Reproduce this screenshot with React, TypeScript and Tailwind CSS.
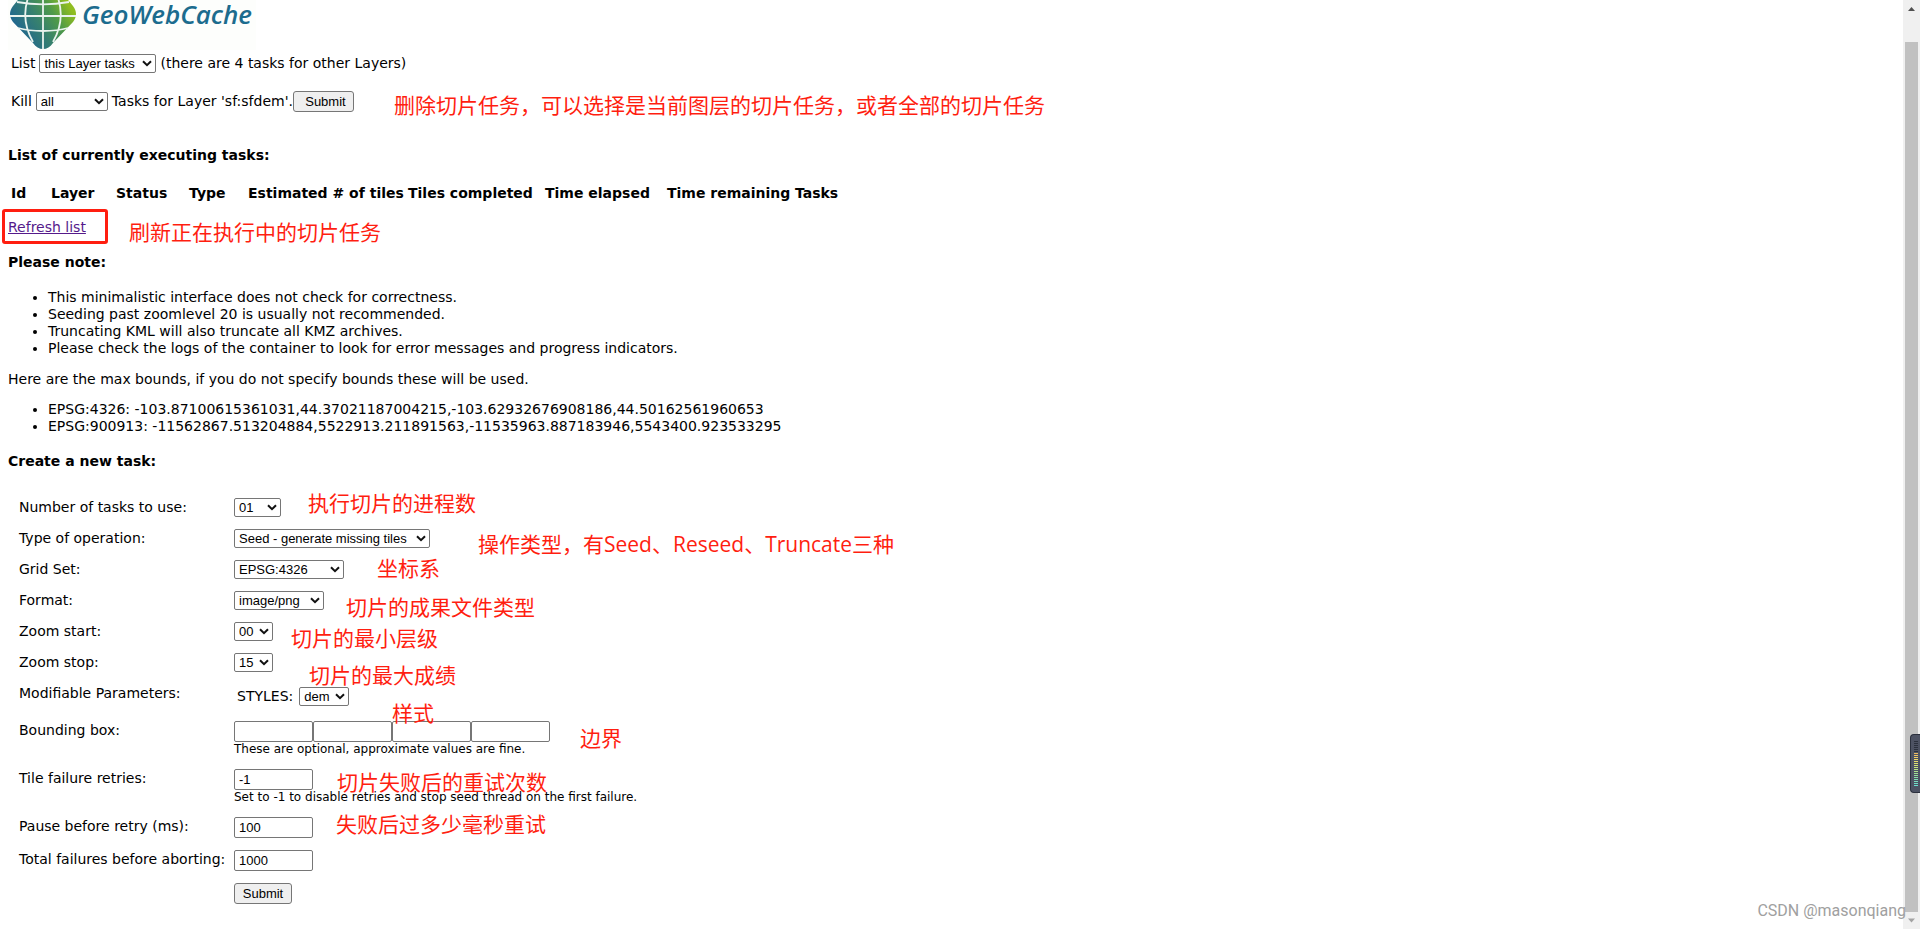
import type { ReactNode } from "react";

const uiFont = "font-['Liberation_Sans',Arial,sans-serif]";

interface SelectProps {
  id: string;
  label?: string;
  options: string[];
  className: string;
}

function Select({ id, label, options, className }: SelectProps) {
  return (
    <span className={`relative inline-flex h-[19px] shrink-0 ${className}`}>
      <select
        id={id}
        aria-label={label}
        className={`h-full w-full appearance-none rounded-xs border border-[#767676] bg-white pl-1 text-[13px] leading-4 ${uiFont}`}
      >
        {options.map((o) => (
          <option key={o}>{o}</option>
        ))}
      </select>
      <svg className="pointer-events-none absolute right-1 top-1.5 h-[7px] w-[10px]" viewBox="0 0 10 7" fill="none" stroke="#111" strokeWidth="2">
        <path d="M1 1.2 5 5.2 9 1.2" />
      </svg>
    </span>
  );
}

function TextInput({ id, label, value = "" }: { id?: string; label?: string; value?: string }) {
  return (
    <input
      id={id}
      aria-label={label}
      type="text"
      defaultValue={value}
      className={`h-[21px] w-[79px] rounded-xs border border-[#767676] bg-white px-1 text-[13px] ${uiFont}`}
    />
  );
}

function SubmitButton({ className, children }: { className: string; children: ReactNode }) {
  return (
    <button
      type="button"
      className={`h-[21px] rounded-[3px] border border-[#767676] bg-[#efefef] text-[13px] leading-4 ${uiFont} ${className}`}
    >
      {children}
    </button>
  );
}

function FormRow({ label, htmlFor, children }: { label?: string; htmlFor?: string; children: ReactNode }) {
  return (
    <div className="flex items-start">
      <div className="w-[215px] shrink-0 pt-px">{label && <label htmlFor={htmlFor}>{label}</label>}</div>
      <div className="flex flex-col items-start">{children}</div>
    </div>
  );
}

function Logo() {
  return (
    <div className="flex h-[50px] w-[248px] gap-1 bg-[#fdfefc]">
      <svg className="h-[50px] w-[70px] shrink-0" viewBox="0 0 70 50" fill="none">
        <defs>
          <linearGradient id="globe" x1="10" y1="34" x2="60" y2="4" gradientUnits="userSpaceOnUse">
            <stop offset="0" stopColor="#1f6591" />
            <stop offset="0.4" stopColor="#36806f" />
            <stop offset="0.7" stopColor="#4f9a48" />
            <stop offset="1" stopColor="#8fbd20" />
          </linearGradient>
        </defs>
        <path
          d="M14-5 5 6C1 11 1 17 5 22L25 43C28 47 31 49 35 49S42 47 45 43L65 22C69 17 69 11 65 6L56-5Z"
          fill="url(#globe)"
        />
        <g stroke="#eaf3ee" strokeWidth="1.8">
          <path d="M35-2v51M2 16h66M9 2c16 3 36 3 52 0M10 28c14 4 36 4 50 0M20-2c-5 15-3 30 5 44M50-2c5 15 3 30-5 44" />
        </g>
      </svg>
      <span className="font-['Open_Sans',sans-serif] text-[26px] font-semibold italic leading-7 text-[#1c6c8e]">GeoWebCache</span>
    </div>
  );
}

// Red notes laid over the page
const notes = [
  { text: "删除切片任务，可以选择是当前图层的切片任务，或者全部的切片任务", pos: "left-[394px] top-[90px]" },
  { text: "刷新正在执行中的切片任务", pos: "left-[129px] top-[217px]" },
  { text: "执行切片的进程数", pos: "left-[308px] top-[488px]" },
  { text: "操作类型，有Seed、Reseed、Truncate三种", pos: "left-[478px] top-[529px]" },
  { text: "坐标系", pos: "left-[377px] top-[553px]" },
  { text: "切片的成果文件类型", pos: "left-[346px] top-[592px]" },
  { text: "切片的最小层级", pos: "left-[291px] top-[623px]" },
  { text: "切片的最大成绩", pos: "left-[309px] top-[660px]" },
  { text: "样式", pos: "left-[392px] top-[698px]" },
  { text: "边界", pos: "left-[580px] top-[723px]" },
  { text: "切片失败后的重试次数", pos: "left-[337px] top-[767px]" },
  { text: "失败后过多少毫秒重试", pos: "left-[336px] top-[809px]" },
];

const columns = [
  { name: "Id", width: "w-10" },
  { name: "Layer", width: "w-[65px]" },
  { name: "Status", width: "w-[73px]" },
  { name: "Type", width: "w-[59px]" },
  { name: "Estimated # of tiles", width: "w-[160px]" },
  { name: "Tiles completed", width: "w-[137px]" },
  { name: "Time elapsed", width: "w-[122px]" },
  { name: "Time remaining", width: "w-[128px]" },
  { name: "Tasks", width: "w-[50px]" },
];

const meter = [
  "#2b303d", "#2b303d", "#2b303d", "#2b303d", "#2b303d", "#2b303d",
  "#f0bc60", "#f0c562", "#f0ce64", "#eed768", "#e7dd6c", "#dee170",
  "#d3e476", "#c7e57d", "#bae484", "#ade38c", "#a1e194", "#95df9c",
  "#8bdea6", "#81ddb1", "#78ddbc", "#70dec6", "#6ae0d0",
];

function Scrollbar() {
  return (
    <aside className="flex w-[17px] shrink-0 flex-col items-center bg-[#f0f0f0]">
      <svg className="h-[42px] w-[17px]" viewBox="0 0 17 42">
        <path d="M8.5 7 12 11H5Z" fill="#505050" />
      </svg>
      <div className="w-[13px] flex-1 bg-[#c1c1c1]" />
      <svg className="h-[17px] w-[17px]" viewBox="0 0 17 17">
        <path d="M8.5 10.500 12 6.500H5Z" fill="#a3a3a3" />
      </svg>
    </aside>
  );
}

export default function App() {
  return (
    <div className="relative flex min-h-screen overflow-hidden bg-white font-['DejaVu_Sans',Verdana,sans-serif] text-[14px] leading-[17px] text-black">
      <main className="min-w-0 flex-1 px-2">
        <Logo />

        <div className="ml-[3px] mt-1 flex items-center gap-1">
          <span>List</span>
          <Select id="list" label="List" options={["this Layer tasks", "all Layers tasks"]} className="w-[117px]" />
          <span>(there are 4 tasks for other Layers)</span>
        </div>
        <div className="ml-[3px] mt-[18px] flex items-center">
          <span className="mr-1">Kill</span>
          <Select id="kill" label="Kill" options={["all", "running", "pending"]} className="mr-1 w-[72px]" />
          <span>Tasks for Layer 'sf:sfdem'.</span>
          <SubmitButton className="w-[61px] pl-1">Submit</SubmitButton>
        </div>

        <h4 className="mt-[35px] font-bold">List of currently executing tasks:</h4>

        <table className="ml-[3px] mt-[21px] table-fixed">
          <thead>
            <tr>
              {columns.map((c) => (
                <th key={c.name} className={`whitespace-nowrap p-0 text-left font-bold ${c.width}`}>
                  {c.name}
                </th>
              ))}
            </tr>
          </thead>
        </table>

        <p className="mt-[17px]">
          <a href="#" className="text-[#551a8b] underline">Refresh list</a>
        </p>

        <h4 className="mt-[18px] font-bold">Please note:</h4>
        <ul className="mt-[18px] list-disc pl-10">
          <li>This minimalistic interface does not check for correctness.</li>
          <li>Seeding past zoomlevel 20 is usually not recommended.</li>
          <li>Truncating KML will also truncate all KMZ archives.</li>
          <li>Please check the logs of the container to look for error messages and progress indicators.</li>
        </ul>

        <p className="mt-3.5">Here are the max bounds, if you do not specify bounds these will be used.</p>
        <ul className="mt-[13px] list-disc pl-10">
          <li>EPSG:4326: -103.87100615361031,44.37021187004215,-103.62932676908186,44.50162561960653</li>
          <li>EPSG:900913: -11562867.513204884,5522913.211891563,-11535963.887183946,5543400.923533295</li>
        </ul>

        <h4 className="mt-[18px] font-bold">Create a new task:</h4>

        <form className="ml-[11px] mt-7 flex flex-col gap-3">
          <FormRow label="Number of tasks to use:" htmlFor="threads">
            <Select id="threads" options={["01", "02", "03", "04"]} className="w-[47px]" />
          </FormRow>
          <FormRow label="Type of operation:" htmlFor="operation">
            <Select
              id="operation"
              options={["Seed - generate missing tiles", "Reseed - regenerate all tiles", "Truncate - remove tiles"]}
              className="w-[196px]"
            />
          </FormRow>
          <FormRow label="Grid Set:" htmlFor="gridset">
            <Select id="gridset" options={["EPSG:4326", "EPSG:900913"]} className="w-[110px]" />
          </FormRow>
          <FormRow label="Format:" htmlFor="format">
            <Select id="format" options={["image/png", "image/jpeg"]} className="w-[90px]" />
          </FormRow>
          <FormRow label="Zoom start:" htmlFor="zoomStart">
            <Select id="zoomStart" options={["00", "01", "02"]} className="w-[39px]" />
          </FormRow>
          <FormRow label="Zoom stop:" htmlFor="zoomStop">
            <Select id="zoomStop" options={["15", "16", "17"]} className="w-[39px]" />
          </FormRow>
          <FormRow label="Modifiable Parameters:" htmlFor="styles">
            <div className="flex items-center gap-1.5 p-[3px]">
              <span>STYLES:</span>
              <Select id="styles" label="STYLES" options={["dem"]} className="w-[50px]" />
            </div>
          </FormRow>
          <FormRow label="Bounding box:" htmlFor="minX">
            <div className="flex">
              <TextInput id="minX" />
              <TextInput label="min Y" />
              <TextInput label="max X" />
              <TextInput label="max Y" />
            </div>
            <span className="text-[12px] leading-[15px]">These are optional, approximate values are fine.</span>
          </FormRow>
          <FormRow label="Tile failure retries:" htmlFor="retries">
            <TextInput id="retries" value="-1" />
            <span className="text-[12px] leading-[15px]">Set to -1 to disable retries and stop seed thread on the first failure.</span>
          </FormRow>
          <FormRow label="Pause before retry (ms):" htmlFor="pause">
            <TextInput id="pause" value="100" />
          </FormRow>
          <FormRow label="Total failures before aborting:" htmlFor="failures">
            <TextInput id="failures" value="1000" />
          </FormRow>
          <FormRow>
            <SubmitButton className="w-[58px]">Submit</SubmitButton>
          </FormRow>
        </form>
      </main>

      <Scrollbar />

      {notes.map((n) => (
        <p
          key={n.text}
          className={`pointer-events-none absolute whitespace-nowrap font-['Open_Sans','Noto_Sans_CJK_SC',sans-serif] text-[21px] leading-[30px] text-[#ff1e10] ${n.pos}`}
        >
          {n.text}
        </p>
      ))}
      <div className="pointer-events-none absolute left-0.5 top-[209px] h-[35px] w-[106px] rounded-[3px] border-3 border-[#ff1e10]" />

      {/* Level meter docked at the window edge */}
      <div className="absolute right-0 top-[734px] flex h-[59px] w-[10px] flex-col items-center gap-px rounded-l-[4px] border border-r-0 border-[#2b303d] bg-[#4d5263] pt-1.5">
        {meter.map((color, i) => (
          <span key={i} className="h-px w-1 shrink-0" style={{ backgroundColor: color }} />
        ))}
      </div>

      <span className="pointer-events-none absolute bottom-1.5 right-[14px] font-['Roboto',Arial,sans-serif] text-[16px] leading-6 text-[#a0a0a0]">
        CSDN @masonqiang
      </span>
    </div>
  );
}
